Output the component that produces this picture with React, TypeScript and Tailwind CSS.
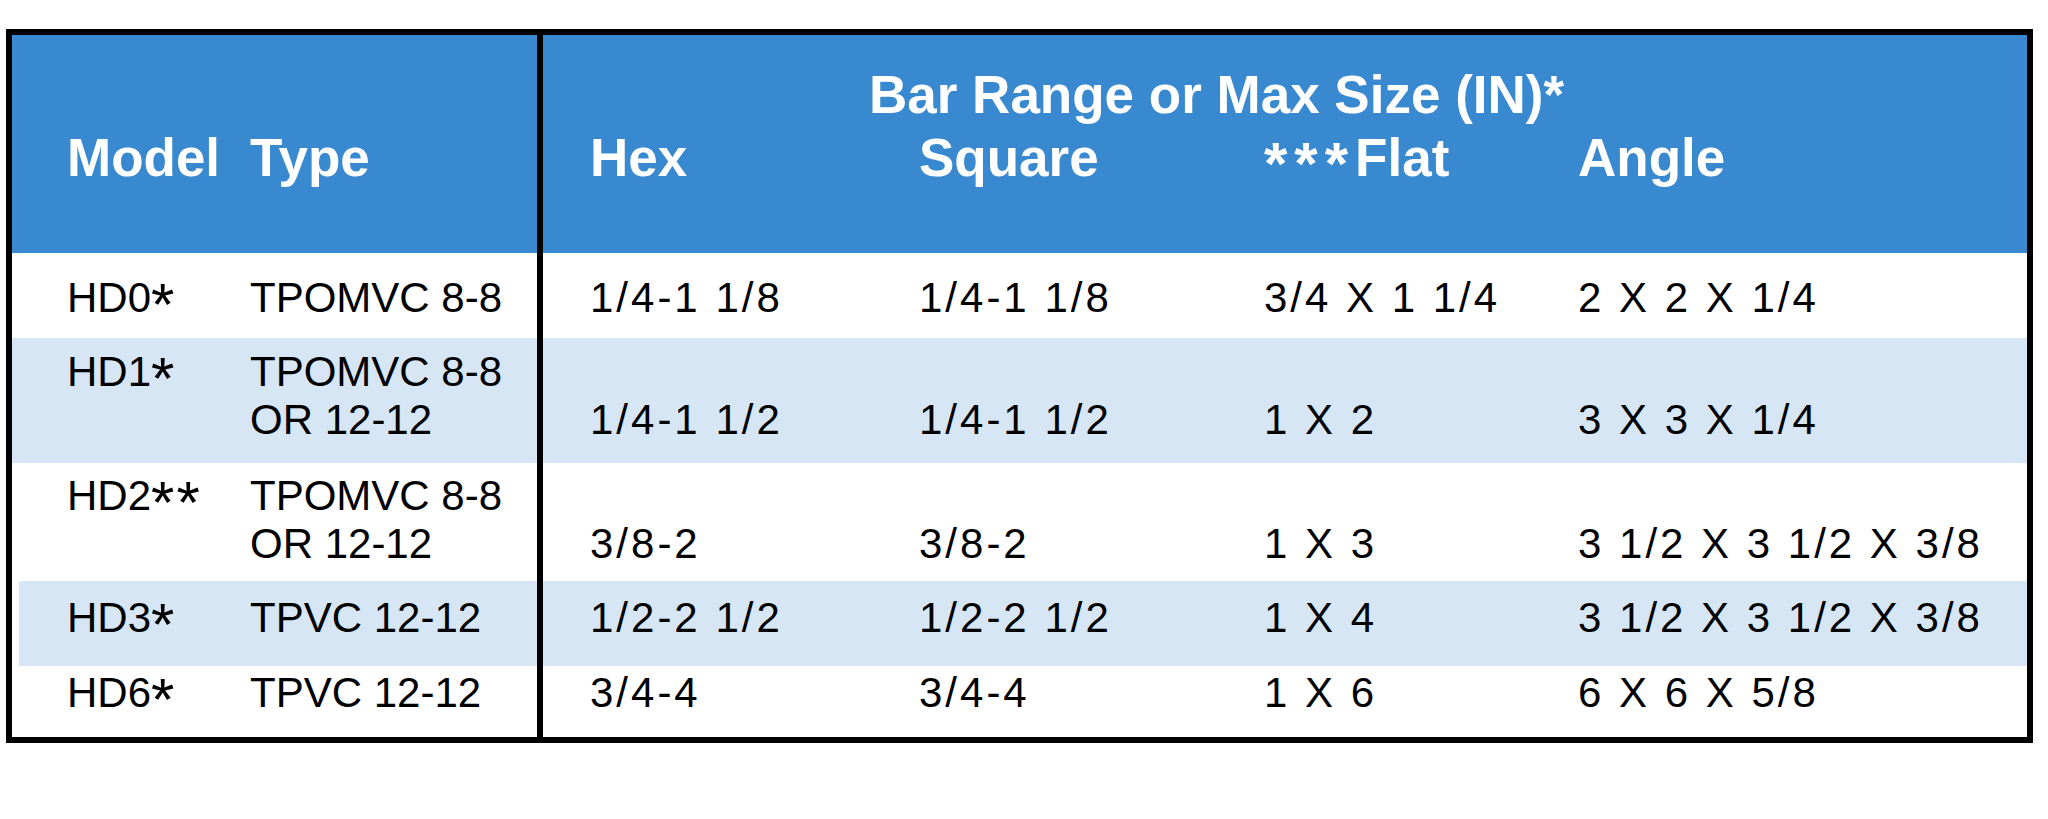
import clsx from 'clsx';

type Row = {
  model: string;
  type: string[];
  values: string[];
  tinted: boolean;
  pad: string;
  inset?: boolean;
};

const cols = 'grid grid-cols-[238px_293px_376px_345px_314px_1fr]';

const rows: Row[] = [
  {
    model: 'HD0*',
    type: ['TPOMVC 8-8'],
    values: ['1/4-1 1/8', '1/4-1 1/8', '3/4 X 1 1/4', '2 X 2 X 1/4'],
    tinted: false,
    pad: 'pt-[21px] pb-[16px]',
  },
  {
    model: 'HD1*',
    type: ['TPOMVC 8-8', 'OR 12-12'],
    values: ['1/4-1 1/2', '1/4-1 1/2', '1 X 2', '3 X 3 X 1/4'],
    tinted: true,
    pad: 'pt-[10px] pb-[19px]',
  },
  {
    model: 'HD2**',
    type: ['TPOMVC 8-8', 'OR 12-12'],
    values: ['3/8-2', '3/8-2', '1 X 3', '3 1/2 X 3 1/2 X 3/8'],
    tinted: false,
    pad: 'pt-[9px] pb-[13px]',
  },
  {
    model: 'HD3*',
    type: ['TPVC 12-12'],
    values: ['1/2-2 1/2', '1/2-2 1/2', '1 X 4', '3 1/2 X 3 1/2 X 3/8'],
    tinted: true,
    pad: 'pt-[13px] pb-[24px]',
    inset: true,
  },
  {
    model: 'HD6*',
    type: ['TPVC 12-12'],
    values: ['3/4-4', '3/4-4', '1 X 6', '6 X 6 X 5/8'],
    tinted: false,
    pad: 'pt-[3px] pb-[20px]',
  },
];

// the source font draws a big, mid-height asterisk
function ModelName({ name }: { name: string }) {
  const base = name.replace(/\*+$/, '');
  const stars = name.slice(base.length);
  return (
    <>
      {base}
      <span className="relative top-[13px] text-[60px] leading-[0] tracking-[2px]">{stars}</span>
    </>
  );
}

function HeaderRow() {
  return (
    <div className={clsx(cols, 'bg-[#3889cf] text-white font-bold text-[53px] leading-[63px]')}>
      <div className="row-span-2 pl-[55px] pt-[91px] pb-[64px]">Model</div>
      <div className="row-span-2 border-r-[6px] border-black pt-[91px] pb-[64px]">Type</div>
      {/* spans the four bar-size columns */}
      <div className="col-span-4 pl-[326px] pt-[28px]">Bar Range or Max Size (IN)*</div>
      <div className="pl-[47px] pb-[64px]">Hex</div>
      <div>Square</div>
      <div>
        <span className="relative top-[8px] text-[60px] leading-[0] tracking-[7px]">***</span>
        Flat
      </div>
      <div>Angle</div>
    </div>
  );
}

function DataRow({ row }: { row: Row }) {
  return (
    <div className={clsx(cols, row.tinted && 'bg-[#d6e6f5]')}>
      <div
        className={clsx(
          row.pad,
          row.inset ? 'border-l-[7px] border-white pl-[48px]' : 'pl-[55px]'
        )}
      >
        <ModelName name={row.model} />
      </div>
      <div className={clsx(row.pad, 'border-r-[6px] border-black')}>
        {row.type.map((line) => (
          <div key={line}>{line}</div>
        ))}
      </div>
      {row.values.map((v, i) => (
        <div
          key={i}
          className={clsx(row.pad, 'flex items-end tracking-[3px]', i === 0 && 'pl-[47px]')}
        >
          {v}
        </div>
      ))}
    </div>
  );
}

export default function App() {
  return (
    <div
      className="min-h-screen bg-white pt-[29px] pl-[6px] text-black"
      style={{ fontFamily: '"Liberation Sans", Arial, sans-serif' }}
    >
      <div className="w-[2027px] border-[6px] border-black text-[42px] leading-[48px]">
        <HeaderRow />
        {rows.map((row) => (
          <DataRow key={row.model} row={row} />
        ))}
      </div>
    </div>
  );
}
